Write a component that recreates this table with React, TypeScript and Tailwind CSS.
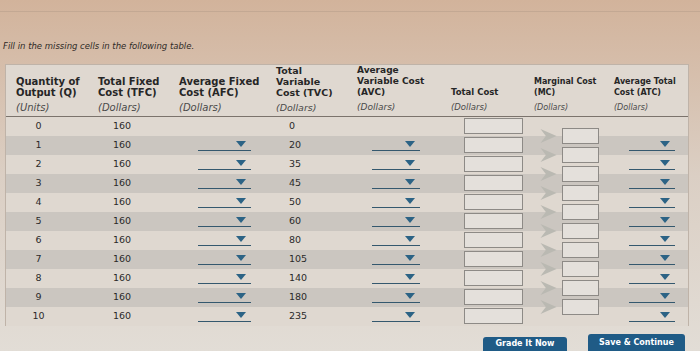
const tvc = ["0", "20", "35", "45", "50", "60", "80", "105", "140", "180", "235"];

function Dropdown({ w = 53 }: { w?: number }) {
  return (
    <div className="relative h-[12px] border-b-[1.5px] border-[#34586e]" style={{ width: w }}>
      <svg viewBox="0 0 10 6" className="absolute right-[5px] top-[2px] w-[10px] h-[6px]">
        <path d="M0 0 L10 0 L5 6 Z" fill="#2c6385" />
      </svg>
    </div>
  );
}

function Chevron() {
  return (
    <svg viewBox="0 0 20 18" className="w-[19px] h-[16px]">
      <path d="M1 1 L19 9 L1 17 L7 9 Z" fill="#bab9b2" />
    </svg>
  );
}

function Head({ lines, sub, size = "text-[10px]" }: { lines: string[]; sub: string; size?: string }) {
  return (
    <div className={`flex flex-col justify-end leading-[11px] ${size}`}>
      {lines.map((l) => (
        <span key={l} className="font-bold text-[#262626]">{l}</span>
      ))}
      <span className="italic text-[#4a4a4a] mt-[4px]">{sub}</span>
    </div>
  );
}

export default function App() {
  return (
    <div className="w-[700px] h-[351px] overflow-hidden bg-gradient-to-b from-[#d2b39b] via-[#dbcfc4] to-[#e2ddd6] font-['DejaVu_Sans',sans-serif] text-[#2a2a2a]">
      <div className="h-[12px] border-b border-[#c3a893]" />
      <p className="mt-[28px] ml-[3px] text-[8.5px] italic text-[#2e2a26]">Fill in the missing cells in the following table.</p>

      <div className="mt-[11px] ml-[5px] w-[684px] border-t border-x border-[#bfb3a8] bg-[#dfd8d0]">
        <div className="grid grid-cols-[82px_81px_97px_81px_94px_83px_80px_1fr] pl-[10px] h-[52px] pb-[3px] border-b border-[#7b736c]">
          <Head lines={["Quantity of", "Output (Q)"]} sub="(Units)" />
          <Head lines={["Total Fixed", "Cost (TFC)"]} sub="(Dollars)" />
          <Head lines={["Average Fixed", "Cost (AFC)"]} sub="(Dollars)" />
          <Head lines={["Total", "Variable", "Cost (TVC)"]} sub="(Dollars)" size="text-[9.5px]" />
          <Head lines={["Average", "Variable Cost", "(AVC)"]} sub="(Dollars)" size="text-[9px]" />
          <Head lines={["Total Cost"]} sub="(Dollars)" size="text-[8.5px]" />
          <Head lines={["Marginal Cost", "(MC)"]} sub="(Dollars)" size="text-[8px]" />
          <Head lines={["Average Total", "Cost (ATC)"]} sub="(Dollars)" size="text-[8px]" />
        </div>

        {tvc.map((v, i) => (
          <div
            key={i}
            className={`grid grid-cols-[82px_81px_97px_81px_94px_83px_80px_1fr] pl-[10px] h-[19px] items-center text-[9.5px] ${i % 2 === 1 ? "bg-[#cbc6c0]" : ""}`}
          >
            <div className="w-[45px] text-center">{i}</div>
            <div className="pl-[15px]">160</div>
            <div className="pl-[19px]">{i > 0 && <Dropdown w={53} />}</div>
            <div className="pl-[13px]">{v}</div>
            <div className="pl-[15px]">{i > 0 && <Dropdown w={48} />}</div>
            <div className="pl-[13px]">
              <div className="w-[59px] h-[16px] border border-[#8d8a86] bg-[#e4e0db]" />
            </div>
            <div className="flex items-center gap-[4px] pl-[5px] -translate-y-[9px]">
              {i > 0 && (
                <>
                  <Chevron />
                  <div className="w-[37px] h-[16px] border border-[#8d8a86] bg-[#e4e0db]" />
                </>
              )}
            </div>
            <div className="pl-[15px]">{i > 0 && <Dropdown w={46} />}</div>
          </div>
        ))}
      </div>

      <div className="flex justify-end items-start gap-[21px] pr-[15px] mt-[8px]">
        <button className="mt-[3px] w-[84px] h-[20px] rounded-t-[3px] bg-[#1f5b86] text-white text-[8px] font-bold leading-[12px] pb-[6px]">Grade It Now</button>
        <button className="w-[97px] h-[20px] rounded-t-[3px] bg-[#1f5b86] text-white text-[8px] font-bold leading-[12px] pt-[2px] pb-[4px]">Save &amp; Continue</button>
      </div>
    </div>
  );
}
